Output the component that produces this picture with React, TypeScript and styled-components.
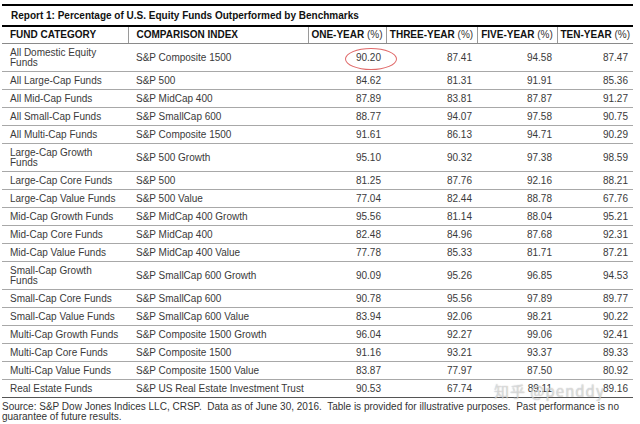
import React from 'react';
import styled, { createGlobalStyle } from 'styled-components';

const GlobalStyle = createGlobalStyle`
  html, body {
    margin: 0;
    padding: 0;
    background: #ffffff;
  }
  body {
    font-family: "Liberation Sans", Arial, sans-serif;
    color: #333333;
  }
`;

interface Row {
  category: string;
  index: string;
  values: string[];
}

const rows: Row[] = [
  { category: 'All Domestic Equity Funds', index: 'S&P Composite 1500', values: ['90.20', '87.41', '94.58', '87.47'] },
  { category: 'All Large-Cap Funds', index: 'S&P 500', values: ['84.62', '81.31', '91.91', '85.36'] },
  { category: 'All Mid-Cap Funds', index: 'S&P MidCap 400', values: ['87.89', '83.81', '87.87', '91.27'] },
  { category: 'All Small-Cap Funds', index: 'S&P SmallCap 600', values: ['88.77', '94.07', '97.58', '90.75'] },
  { category: 'All Multi-Cap Funds', index: 'S&P Composite 1500', values: ['91.61', '86.13', '94.71', '90.29'] },
  { category: 'Large-Cap Growth Funds', index: 'S&P 500 Growth', values: ['95.10', '90.32', '97.38', '98.59'] },
  { category: 'Large-Cap Core Funds', index: 'S&P 500', values: ['81.25', '87.76', '92.16', '88.21'] },
  { category: 'Large-Cap Value Funds', index: 'S&P 500 Value', values: ['77.04', '82.44', '88.78', '67.76'] },
  { category: 'Mid-Cap Growth Funds', index: 'S&P MidCap 400 Growth', values: ['95.56', '81.14', '88.04', '95.21'] },
  { category: 'Mid-Cap Core Funds', index: 'S&P MidCap 400', values: ['82.48', '84.96', '87.68', '92.31'] },
  { category: 'Mid-Cap Value Funds', index: 'S&P MidCap 400 Value', values: ['77.78', '85.33', '81.71', '87.21'] },
  { category: 'Small-Cap Growth Funds', index: 'S&P SmallCap 600 Growth', values: ['90.09', '95.26', '96.85', '94.53'] },
  { category: 'Small-Cap Core Funds', index: 'S&P SmallCap 600', values: ['90.78', '95.56', '97.89', '89.77'] },
  { category: 'Small-Cap Value Funds', index: 'S&P SmallCap 600 Value', values: ['83.94', '92.06', '98.21', '90.22'] },
  { category: 'Multi-Cap Growth Funds', index: 'S&P Composite 1500 Growth', values: ['96.04', '92.27', '99.06', '92.41'] },
  { category: 'Multi-Cap Core Funds', index: 'S&P Composite 1500', values: ['91.16', '93.21', '93.37', '89.33'] },
  { category: 'Multi-Cap Value Funds', index: 'S&P Composite 1500 Value', values: ['83.87', '77.97', '87.50', '80.92'] },
  { category: 'Real Estate Funds', index: 'S&P US Real Estate Investment Trust', values: ['90.53', '67.74', '89.11', '89.16'] },
];

const periods = ['ONE-YEAR', 'THREE-YEAR', 'FIVE-YEAR', 'TEN-YEAR'];
const colWidths = [126, 180, 78, 91, 80, 76];

const Page = styled.div`
  position: relative;
  width: 640px;
  height: 424px;
  padding: 4px 0 0 2px;
  box-sizing: border-box;
  overflow: hidden;
`;

const Title = styled.div`
  width: 631px;
  border-top: 2px solid #000;
  border-bottom: 2px solid #000;
  padding-left: 9px;
  box-sizing: border-box;
  height: 23px;
  line-height: 19px;
  font-size: 10px;
  font-weight: bold;
  color: #111;
`;

const Table = styled.table`
  width: 631px;
  table-layout: fixed;
  border-collapse: collapse;
  font-size: 10px;
  line-height: 10px;
`;

const HeadCell = styled.th<{ $first?: boolean; $left?: boolean }>`
  height: 16px;
  padding: 0 ${({ $left }) => ($left ? '8px' : '0')};
  text-align: ${({ $left }) => ($left ? 'left' : 'center')};
  font-weight: bold;
  color: #111;
  white-space: nowrap;
  border-bottom: 1px solid #8a8a8a;
  border-left: ${({ $first }) => ($first ? 'none' : '1px solid #9a9a9a')};
  box-sizing: border-box;
`;

const Unit = styled.span`
  font-weight: normal;
  color: #333;
`;

const Cell = styled.td<{ $num?: boolean; $last?: boolean; $nowrap?: boolean }>`
  position: relative;
  padding: 4px ${({ $num }) => ($num ? '5px' : '8px')} 3px 8px;
  text-align: ${({ $num }) => ($num ? 'right' : 'left')};
  vertical-align: middle;
  white-space: ${({ $nowrap }) => ($nowrap ? 'nowrap' : 'normal')};
  color: #3a3a3a;
  border-bottom: 1px solid ${({ $last }) => ($last ? '#555' : '#a8a8a8')};
`;

const Circle = styled.span`
  position: absolute;
  left: 37px;
  top: 4px;
  width: 50px;
  height: 20px;
  border: 1px solid #e06a6a;
  border-radius: 50%;
  pointer-events: none;
`;

const Source = styled.p`
  margin: 4px 0 0;
  width: 634px;
  font-size: 10px;
  line-height: 10px;
  color: #333;
  white-space: pre-wrap;
`;

const Watermark = styled.div`
  position: absolute;
  left: 494px;
  top: 380px;
  font-family: "Noto Sans CJK SC", "Liberation Sans", sans-serif;
  font-size: 15px;
  letter-spacing: 1px;
  color: rgba(255, 255, 255, 0.55);
  text-shadow: 0 0 1px rgba(120, 120, 120, 0.7);
  pointer-events: none;
`;

export default function App() {
  return (
    <Page>
      <GlobalStyle />
      <Title>Report 1: Percentage of U.S. Equity Funds Outperformed by Benchmarks</Title>
      <Table>
        <colgroup>
          {colWidths.map((w, i) => (
            <col key={i} style={{ width: w }} />
          ))}
        </colgroup>
        <thead>
          <tr>
            <HeadCell $first $left>FUND CATEGORY</HeadCell>
            <HeadCell $left>COMPARISON INDEX</HeadCell>
            {periods.map((p) => (
              <HeadCell key={p}>
                {p} <Unit>(%)</Unit>
              </HeadCell>
            ))}
          </tr>
        </thead>
        <tbody>
          {rows.map((r, ri) => {
            const last = ri === rows.length - 1;
            return (
              <tr key={r.category}>
                <Cell $last={last}>{r.category}</Cell>
                <Cell $last={last} $nowrap>{r.index}</Cell>
                {r.values.map((v, vi) => (
                  <Cell key={vi} $num $last={last}>
                    {ri === 0 && vi === 0 && <Circle />}
                    {v}
                  </Cell>
                ))}
              </tr>
            );
          })}
        </tbody>
      </Table>
      <Source>
        {'Source: S&P Dow Jones Indices LLC, CRSP.  Data as of June 30, 2016.  Table is provided for illustrative purposes.  Past performance is no guarantee of future results.'}
      </Source>
      <Watermark>知乎 @penddy</Watermark>
    </Page>
  );
}
